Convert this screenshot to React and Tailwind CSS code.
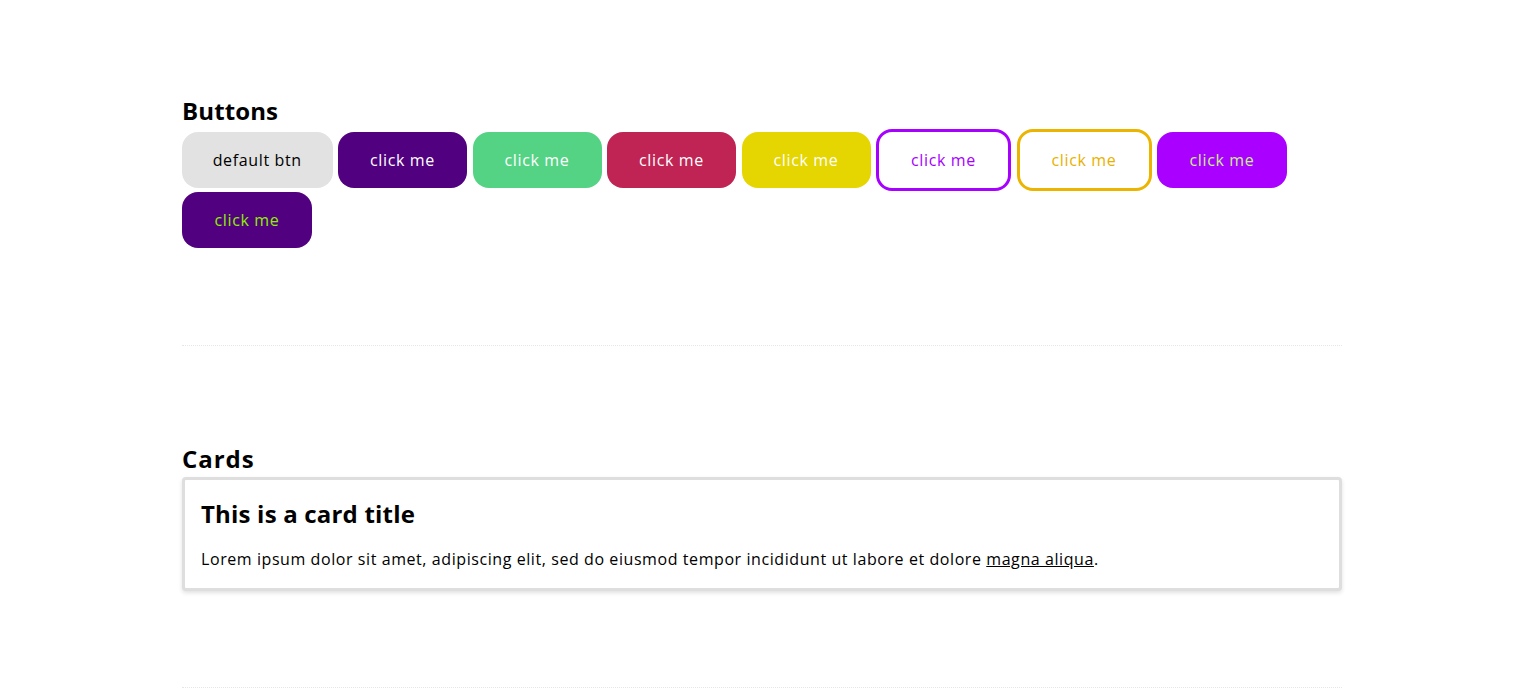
import React from "react";

const font = "font-['Open_Sans',sans-serif]";

function Btn({ className, children }) {
  return (
    <button
      className={`flex items-center justify-center rounded-2xl text-[16px] leading-[24px] tracking-[0.04em] ${font} ${className}`}
    >
      {children}
    </button>
  );
}

export default function App() {
  return (
    <div className={`min-h-screen bg-white text-black ${font}`}>
      <div className="ml-[182px] w-[1160px]">
        <section className="pt-[93px]">
          <h2 className={`text-[24px] leading-[36px] font-bold tracking-[0.005em] ${font}`}>Buttons</h2>
          <div className="flex flex-wrap items-center gap-x-[5.5px] gap-y-[1px]">
            <Btn className="w-[150.5px] h-[56px] bg-[#e2e2e2] text-black">default btn</Btn>
            <Btn className="w-[129px] h-[56px] bg-[#51007f] text-white">click me</Btn>
            <Btn className="w-[129px] h-[56px] bg-[#54d385] text-white">click me</Btn>
            <Btn className="w-[129px] h-[56px] bg-[#c02454] text-white">click me</Btn>
            <Btn className="w-[129px] h-[56px] bg-[#e5d500] text-white">click me</Btn>
            <Btn className="w-[135px] h-[62px] bg-white border-[3px] border-[#a600ff] text-[#a600ff]">click me</Btn>
            <Btn className="w-[135px] h-[62px] bg-white border-[3px] border-[#ebb400] text-[#e8b100]">click me</Btn>
            <Btn className="w-[130px] h-[56px] bg-[#aa00ff] text-[#c4f08a]">click me</Btn>
            <Btn className="w-[130px] h-[56px] bg-[#51007f] text-[#8cf000]">click me</Btn>
          </div>
        </section>
        <div className="mt-[97px] border-t border-dotted border-[#e6e6e6]" />
        <section className="pt-[95px]">
          <h2 className={`text-[24px] leading-[36px] font-bold tracking-[0.04em] ${font}`}>Cards</h2>
          <div className="border-[3px] border-[#dedede] rounded-[4px] shadow-[0_2px_4px_rgba(0,0,0,0.12)] p-4 pb-[17px] bg-white">
            <h3 className={`text-[24px] leading-[36px] font-bold mb-[15px] tracking-[0.008em] ${font}`}>This is a card title</h3>
            <p className="text-[16px] leading-[24px] tracking-[0.036em]">
              Lorem ipsum dolor sit amet, adipiscing elit, sed do eiusmod tempor incididunt ut labore et dolore{" "}
              <a href="#" className="underline">magna aliqua</a>.
            </p>
          </div>
        </section>
        <div className="mt-[96px] border-t border-dotted border-[#e6e6e6]" />
      </div>
    </div>
  );
}
